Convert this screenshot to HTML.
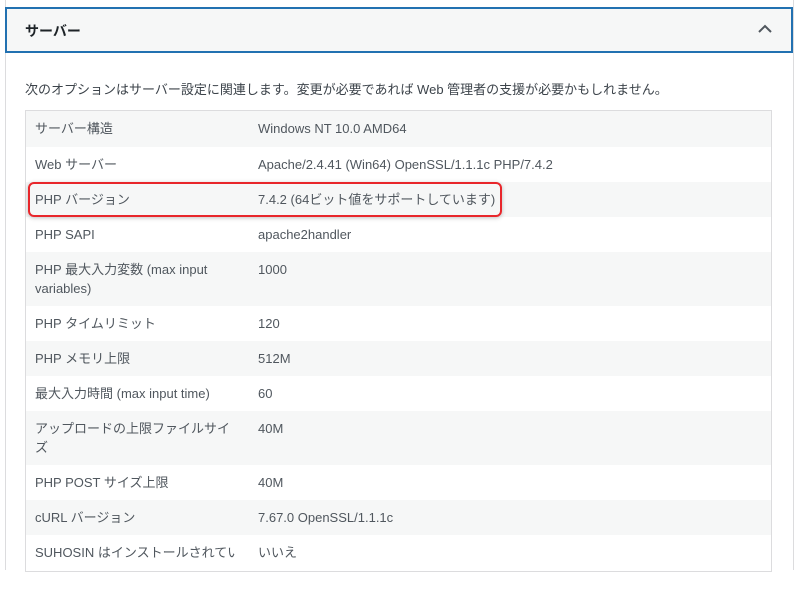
<!DOCTYPE html>
<html><head><meta charset="utf-8"><style>
body{margin:0;width:800px;height:560px;overflow:hidden;background:#fff;font-family:"Liberation Sans","Noto Sans CJK JP",sans-serif;font-size:13px;color:#50575e;position:relative}
.outer{position:absolute;left:5px;top:0;width:787px;height:570px;border-left:1px solid #dcdcde;border-right:1px solid #dcdcde}
.hdr{position:absolute;left:5px;top:7px;width:784px;height:42px;border:2px solid #2271b1;background:#f6f7f7}
.hdr b{position:absolute;left:18px;top:12px;font-size:14px;color:#1d2327}
.chev{position:absolute;right:18px;top:14px}
.desc{position:absolute;left:25px;top:79px;font-size:13px;color:#3c434a}
.tbl{position:absolute;left:25px;top:110px;width:745px;height:460px;border:1px solid #dcdcde}
.r{position:absolute;left:0;width:745px}
.r.g{background:#f6f7f7}
.l{position:absolute;left:9px;top:8px;width:196px;line-height:19px}
.v{position:absolute;left:232px;top:8px;line-height:19px}
.red{position:absolute;left:28px;top:182px;width:470px;height:31px;border:2px solid #e8262b;border-radius:6px;box-shadow:0 1px 4px rgba(0,0,0,.25)}
</style></head><body>
<div class="outer"></div>
<div class="hdr"><b>サーバー</b><svg class="chev" width="16" height="12" viewBox="0 0 16 12"><path d="M2 9 L8 3 L14 9" fill="none" stroke="#50575e" stroke-width="2"/></svg></div>
<div class="desc">次のオプションはサーバー設定に関連します。変更が必要であれば Web 管理者の支援が必要かもしれません。</div>
<div class="tbl">
<div class="r g" style="top:0;height:36px"><div class="l">サーバー構造</div><div class="v">Windows NT 10.0 AMD64</div></div>
<div class="r" style="top:36px;height:35px"><div class="l">Web サーバー</div><div class="v">Apache/2.4.41 (Win64) OpenSSL/1.1.1c PHP/7.4.2</div></div>
<div class="r g" style="top:71px;height:35px"><div class="l">PHP バージョン</div><div class="v">7.4.2 (64ビット値をサポートしています)</div></div>
<div class="r" style="top:106px;height:35px"><div class="l">PHP SAPI</div><div class="v">apache2handler</div></div>
<div class="r g" style="top:141px;height:54px"><div class="l">PHP 最大入力変数 (max input variables)</div><div class="v">1000</div></div>
<div class="r" style="top:195px;height:35px"><div class="l">PHP タイムリミット</div><div class="v">120</div></div>
<div class="r g" style="top:230px;height:35px"><div class="l">PHP メモリ上限</div><div class="v">512M</div></div>
<div class="r" style="top:265px;height:35px"><div class="l">最大入力時間 (max input time)</div><div class="v">60</div></div>
<div class="r g" style="top:300px;height:54px"><div class="l">アップロードの上限ファイルサイズ</div><div class="v">40M</div></div>
<div class="r" style="top:354px;height:35px"><div class="l">PHP POST サイズ上限</div><div class="v">40M</div></div>
<div class="r g" style="top:389px;height:35px"><div class="l">cURL バージョン</div><div class="v">7.67.0 OpenSSL/1.1.1c</div></div>
<div class="r" style="top:424px;height:54px"><div class="l" style="white-space:nowrap;overflow:hidden;width:200px">SUHOSIN はインストールされてい</div><div class="v">いいえ</div></div>
</div>
<div class="red"></div>
</body></html>
